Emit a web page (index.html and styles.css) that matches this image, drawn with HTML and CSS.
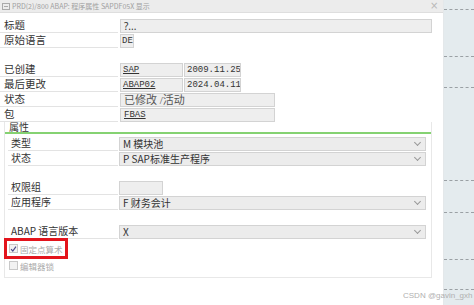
FILE: index.html
```html
<!DOCTYPE html>
<html>
<head>
<meta charset="utf-8">
<link rel="stylesheet" href="styles.css">
</head>
<body>
<div class="app">
  <div class="main">
    <div class="titlebar">
      <svg class="ticon" width="8" height="7" viewBox="0 0 8 7"><rect x="0.5" y="0.5" width="7" height="6" fill="none" stroke="#aaa"/><line x1="2" y1="3.5" x2="6" y2="3.5" stroke="#aaa"/></svg>
      <span class="ttext">PRD(2)/800 ABAP: 程序属性 SAPDF05X 显示</span>
      <span class="close">×</span>
    </div>
    <div class="form">
      <div class="row"><div class="lbl">标题</div><div class="fld w-title sans">?...</div></div>
      <div class="row"><div class="lbl">原始语言</div><div class="fld w-de mono">DE</div></div>
      <div class="gap"></div>
      <div class="row"><div class="lbl">已创建</div><div class="fld w-user mono"><u>SAP</u></div><div class="fld w-date mono">2009.11.25</div></div>
      <div class="row"><div class="lbl">最后更改</div><div class="fld w-user mono"><u>ABAP02</u></div><div class="fld w-date mono">2024.04.11</div></div>
      <div class="row"><div class="lbl">状态</div><div class="fld w-stat serif">已修改 /活动</div></div>
      <div class="row"><div class="lbl">包</div><div class="fld w-stat mono"><u>FBAS</u></div></div>
      <div class="group">
        <div class="ghead">属性</div>
        <div class="grow first"><div class="lbl">类型</div><div class="fld dd"><span>M 模块池</span><span class="chev"></span></div></div>
        <div class="grow"><div class="lbl">状态</div><div class="fld dd"><span>P SAP标准生产程序</span><span class="chev"></span></div></div>
        <div class="gap"></div>
        <div class="grow"><div class="lbl">权限组</div><div class="fld w-auth"></div></div>
        <div class="grow"><div class="lbl">应用程序</div><div class="fld dd"><span>F 财务会计</span><span class="chev"></span></div></div>
        <div class="gap"></div>
        <div class="grow"><div class="lbl">ABAP 语言版本</div><div class="fld dd"><span>X</span><span class="chev"></span></div></div>
        <div class="cbrow marked"><span class="cb checked"><svg width="8" height="8" viewBox="0 0 8 8"><path d="M1.2 4.2 L3.2 6.3 L6.8 1.2" fill="none" stroke="#4a4a8a" stroke-width="1.3"/></svg></span><span class="cbl">固定点算术</span></div>
        <div class="cbrow"><span class="cb"></span><span class="cbl">编辑器锁</span></div>
      </div>
    </div>
  </div>
  <div class="side">
    <div class="seg s1"></div>
    <div class="seg s2"></div>
    <div class="seg s3"></div>
    <div class="seg s4"></div>
    <div class="seg s5"></div>
    <div class="seg s6"></div>
    <div class="seg s7"></div>
  </div>
  <div class="watermark">CSDN @gavin_gxh</div>
</div>
</body>
</html>
```
FILE: styles.css
```css
html, body {
  margin: 0;
  padding: 0;
  background: #ffffff;
}
body {
  font-family: "Noto Sans CJK SC", "Noto Sans", sans-serif;
  color: #333;
}
.app {
  position: relative;
  display: flex;
  width: 474px;
  height: 305px;
  overflow: hidden;
}
.main {
  width: 443px;
  border-right: 1px solid #e4e8ea;
  background: #fff;
}
.titlebar {
  height: 12px;
  background: #ececec;
  border-bottom: 1px solid #dedede;
  display: flex;
  align-items: center;
  padding-left: 2px;
  font-size: 7px;
  color: #a0a0a0;
  white-space: nowrap;
}
.ticon { margin-right: 2px; flex: none; }
.ttext { flex: 1; line-height: 12px; }
.close {
  width: 10px;
  margin-right: 3px;
  color: #b8b8b8;
  font-size: 10px;
  line-height: 12px;
  font-family: "DejaVu Sans", sans-serif;
}
.form {
  padding-top: 5px;
}
.row, .grow {
  display: flex;
  align-items: center;
  height: 15px;
}
.lbl {
  box-sizing: border-box;
  width: 118px;
  height: 15px;
  padding-left: 4px;
  border-bottom: 1px solid #e3e3e3;
  font-size: 10.5px;
  line-height: 14px;
  color: #333;
  white-space: nowrap;
}
.grow .lbl {
  width: 110px;
  margin-left: 3px;
  padding-left: 3px;
  font-size: 10px;
}
.fld {
  box-sizing: border-box;
  height: 14px;
  margin-left: 2px;
  background: #eeeeee;
  border: 1px solid #d3d3d3;
  font-size: 10px;
  line-height: 12px;
  padding: 0 3px;
  color: #333;
  white-space: nowrap;
  overflow: hidden;
}
.fld + .fld { margin-left: 1px; }
.mono { font-family: "Liberation Mono", "Noto Sans CJK SC", monospace; font-size: 9px; }
.serif { font-family: "Liberation Serif", "Noto Sans CJK SC", serif; font-size: 11px; color: #555; }
.sans { font-family: "Noto Sans", sans-serif; }
.w-title { width: 312px; }
.w-de { width: 14px; padding: 0 1px; }
.w-user { width: 63px; padding-left: 2px; }
.w-date { width: 57px; padding-left: 2px; }
.w-stat { width: 155px; }
.w-auth { width: 44px; }
.gap { height: 14px; }
.group {
  box-sizing: border-box;
  width: 428px;
  height: 156px;
  margin-left: 4px;
  margin-top: 0;
  border: 1px solid #e8e8e8;
  border-top: none;
}
.ghead {
  height: 10px;
  padding-left: 4px;
  font-size: 10px;
  line-height: 10px;
  color: #333;
  border-bottom: 2px solid #85d272;
}
.grow.first { margin-top: 2px; }
.grow .fld { margin-left: 1px; }
.dd {
  width: 307px;
  display: flex;
  align-items: center;
  justify-content: space-between;
  background: #ececec;
  font-size: 10px;
  padding-left: 3px;
  padding-right: 5px;
}
.chev {
  width: 4px;
  height: 4px;
  border-right: 1px solid #999;
  border-bottom: 1px solid #999;
  transform: rotate(45deg);
  margin-top: -3px;
}
.cbrow {
  display: flex;
  align-items: center;
  height: 15px;
  width: 58px;
  margin-left: 2px;
  margin-top: 2px;
}
.cbrow.marked {
  outline: 3px solid #e3141c;
}
.cb {
  box-sizing: border-box;
  width: 9px;
  height: 9px;
  border: 1px solid #c8c8c8;
  background: #f2f2f2;
  margin-left: 2px;
  margin-right: 2px;
  display: flex;
  align-items: center;
  justify-content: center;
  flex: none;
}
.cb svg { display: block; }
.cbl {
  font-size: 8.5px;
  color: #aaaaaa;
  white-space: nowrap;
  line-height: 14px;
}
.side {
  flex: 1;
  background: #e4ebee;
  display: flex;
  flex-direction: column;
}
.seg {
  border-bottom: 1px dashed #9aa0a4;
  flex: none;
}
.s1 { height: 9px; }
.s2 { height: 46px; }
.s3 { height: 30px; }
.s4 { height: 92px; }
.s5 { height: 31px; }
.s6 { height: 46px; }
.s7 { height: 29px; }
.watermark {
  position: absolute;
  right: 7px;
  top: 291px;
  width: 64px;
  text-align: right;
  font-family: "Liberation Sans", sans-serif;
  font-size: 8px;
  line-height: 10px;
  color: #b0b0b0;
  white-space: nowrap;
}
```
